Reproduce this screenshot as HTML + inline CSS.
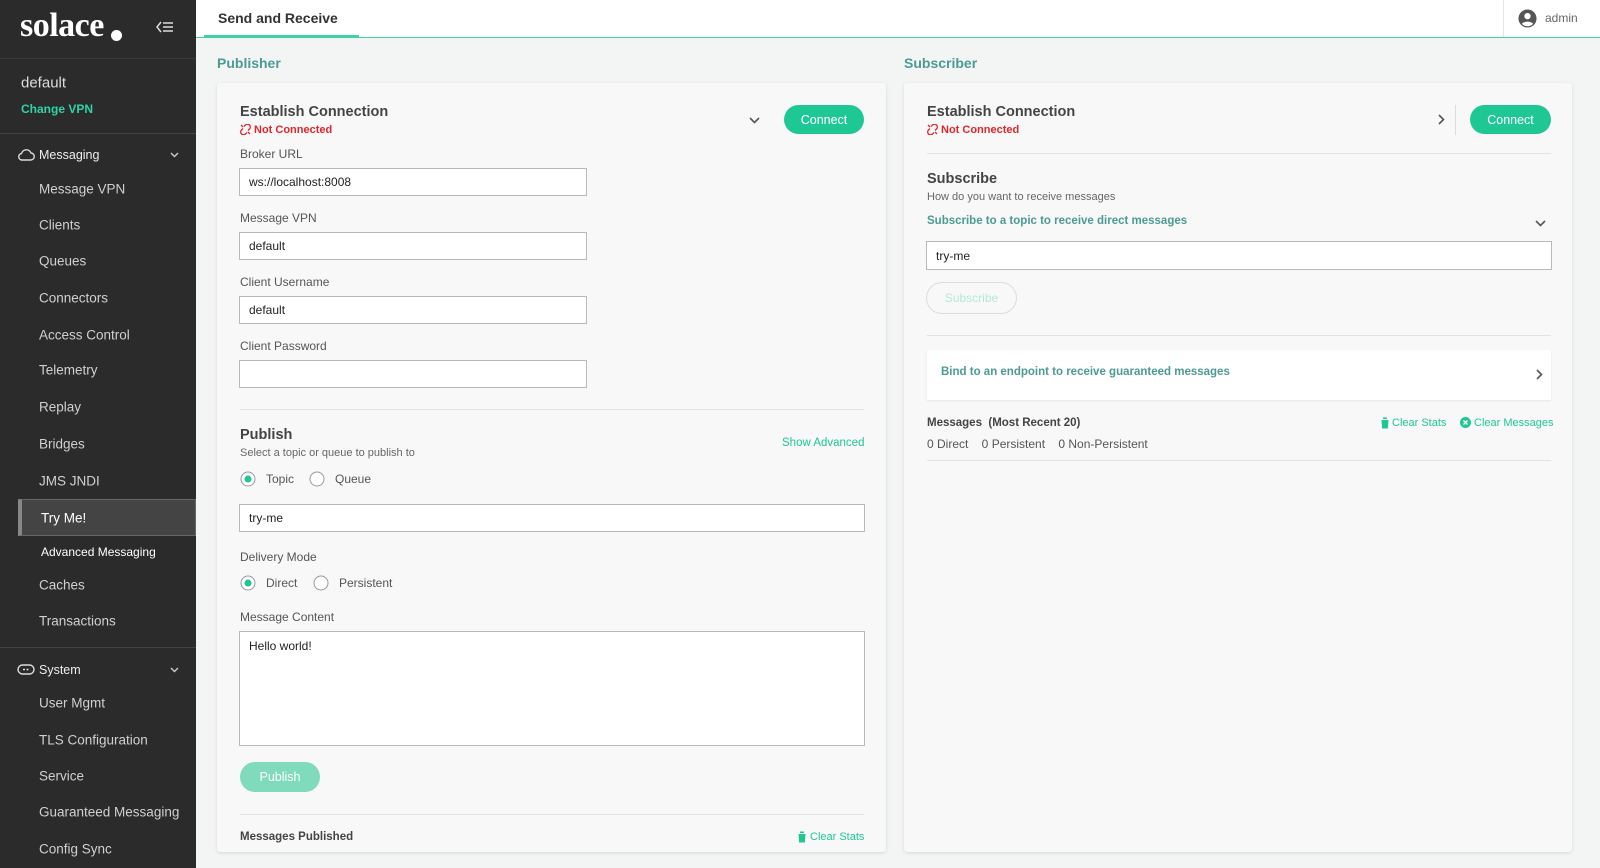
<!DOCTYPE html>
<html><head><meta charset="utf-8"><style>
*{box-sizing:border-box;margin:0;padding:0}
body{width:1600px;height:868px;overflow:hidden;background:#f3f4f4;font-family:"Liberation Sans",sans-serif;color:#333;position:relative;font-size:12px}
.a{position:absolute;white-space:nowrap}
#side{position:absolute;left:0;top:0;width:196px;height:868px;background:#2b2b2b}
.si{position:absolute;left:39px;color:#d0d0d0;font-size:13.5px;transform:translateY(-50%)}
.inp{position:absolute;background:#fff;border:1px solid #b9b9b9;font-size:12px;padding-left:9px;display:flex;align-items:center;color:#222}
.lbl{position:absolute;font-size:12px;color:#555;transform:translateY(-50%)}
.card{position:absolute;background:#f8f8f8;box-shadow:0 1px 3px rgba(0,0,0,.12);border-radius:3px}
.btn{position:absolute;background:#1fc795;color:#fff;border-radius:15px;font-size:12.5px;display:flex;align-items:center;justify-content:center}
.hr{position:absolute;height:1px;background:#e2e2e2}
.rad{position:absolute;width:15px;height:15px;border:1px solid #999;border-radius:50%;background:#fff;transform:translate(-50%,-50%)}
.rad.on::after{content:"";position:absolute;left:3px;top:3px;width:7px;height:7px;border-radius:50%;background:#1fc795}
.t{transform:translateY(-50%)}
.h{font-size:14.5px;font-weight:bold;color:#444}
.nc{color:#e0262d;font-weight:bold;font-size:11px}
.g{color:#1fc795}
</style></head><body>
<div id="side">
 <div class="a" style="left:20px;top:7px;font-family:'Liberation Serif',serif;font-size:34px;font-weight:bold;color:#fff;letter-spacing:-0.5px">solace</div>
 <div class="a" style="left:111px;top:30px;width:11px;height:11px;border-radius:50%;background:#fff"></div>
 <svg class="a" style="left:156px;top:21px" width="18" height="12" viewBox="0 0 18 12"><path d="M5 1L1 6l4 5M7 2h10M7 6h10M7 10h10" fill="none" stroke="#ddd" stroke-width="1.5"/></svg>
 <div class="a" style="left:0;top:58px;width:196px;height:1px;background:#3a3a3a"></div>
 <div class="a t" style="left:21px;top:83px;color:#ddd;font-size:15px">default</div>
 <div class="a t" style="left:21px;top:109px;color:#2fd3a5;font-size:12px;font-weight:bold">Change VPN</div>
 <div class="a" style="left:0;top:133px;width:196px;height:1px;background:#444"></div>
 <svg class="a" style="left:17px;top:148px" width="18" height="13" viewBox="0 0 18 13"><path d="M4.5 12h9a3.5 3.5 0 0 0 .5-7A5 5 0 0 0 4.5 5.5 3.3 3.3 0 0 0 4.5 12z" fill="none" stroke="#ddd" stroke-width="1.4"/></svg>
 <div class="si" style="left:39px;top:155px;color:#eee;font-size:12.5px">Messaging</div>
 <svg class="a" style="left:170px;top:152px" width="9" height="6" viewBox="0 0 9 6"><path d="M1 1l3.5 3.5L8 1" fill="none" stroke="#ccc" stroke-width="1.4"/></svg>
 <div class="si" style="top:189px">Message VPN</div>
 <div class="si" style="top:225px">Clients</div>
 <div class="si" style="top:261px">Queues</div>
 <div class="si" style="top:298px">Connectors</div>
 <div class="si" style="top:335px">Access Control</div>
 <div class="si" style="top:370px">Telemetry</div>
 <div class="si" style="top:407px">Replay</div>
 <div class="si" style="top:444px">Bridges</div>
 <div class="si" style="top:481px">JMS JNDI</div>
 <div class="a" style="left:18px;top:499px;width:178px;height:37px;background:#444;border:1px solid #666;border-left:4px solid #888"></div>
 <div class="si" style="left:41px;top:518px;color:#fff">Try Me!</div>
 <div class="si" style="left:41px;top:552px;color:#fff;font-size:12px">Advanced Messaging</div>
 <div class="si" style="top:585px">Caches</div>
 <div class="si" style="top:621px">Transactions</div>
 <div class="a" style="left:0;top:647px;width:196px;height:1px;background:#444"></div>
 <svg class="a" style="left:17px;top:664px" width="18" height="11" viewBox="0 0 18 11"><rect x="1" y="1" width="16" height="9" rx="4.5" fill="none" stroke="#ddd" stroke-width="1.4"/><path d="M6 5.5h6" stroke="#ddd" stroke-width="1.4" stroke-dasharray="2 1.5"/></svg>
 <div class="si" style="left:39px;top:670px;color:#eee;font-size:12.5px">System</div>
 <svg class="a" style="left:170px;top:667px" width="9" height="6" viewBox="0 0 9 6"><path d="M1 1l3.5 3.5L8 1" fill="none" stroke="#ccc" stroke-width="1.4"/></svg>
 <div class="si" style="top:703px">User Mgmt</div>
 <div class="si" style="top:740px">TLS Configuration</div>
 <div class="si" style="top:776px">Service</div>
 <div class="si" style="top:812px">Guaranteed Messaging</div>
 <div class="si" style="top:849px">Config Sync</div>
</div>
<div class="a" style="left:196px;top:0;width:1404px;height:38px;background:#fff;border-bottom:1px solid #3dd1a8"></div>
<div class="a t" style="left:218px;top:18px;font-size:14px;font-weight:bold;color:#333">Send and Receive</div>
<div class="a" style="left:204px;top:35px;width:155px;height:2px;background:#3dd1a8"></div>
<div class="a" style="left:1503px;top:0;width:1px;height:37px;background:#e5e5e5"></div>
<svg class="a" style="left:1518px;top:9px" width="19" height="19" viewBox="0 0 20 20"><circle cx="10" cy="10" r="9.5" fill="#555"/><circle cx="10" cy="7.5" r="3.3" fill="#fff"/><path d="M4 15.5a7 4.5 0 0 1 12 0a8 8 0 0 1-12 0z" fill="#fff"/></svg>
<div class="a t" style="left:1545px;top:18px;font-size:12px;color:#666">admin</div>

<div class="a t" style="left:217px;top:63px;font-size:14px;font-weight:bold;color:#4d9a94">Publisher</div>
<div class="a t" style="left:904px;top:63px;font-size:14px;font-weight:bold;color:#4d9a94">Subscriber</div>

<div class="card" style="left:217px;top:83px;width:669px;height:769px"></div>
<div class="a t h" style="left:240px;top:112px">Establish Connection</div>
<svg class="a" style="left:240px;top:124px" width="11" height="11" viewBox="0 0 11 11"><path d="M4 2.5L5.5 1a2.5 2.5 0 0 1 4 4L8 6.5M7 8.5L5.5 10a2.5 2.5 0 0 1-4-4L3 4.5M1 1l2 2M8 8l2 2" fill="none" stroke="#e0262d" stroke-width="1.3"/></svg>
<div class="a t nc" style="left:254px;top:130px">Not Connected</div>
<svg class="a" style="left:749px;top:117px" width="11" height="7" viewBox="0 0 11 7"><path d="M1 1l4.5 4.5L10 1" fill="none" stroke="#555" stroke-width="1.6"/></svg>
<div class="btn" style="left:784px;top:105px;width:80px;height:29px">Connect</div>
<div class="lbl" style="left:240px;top:154px">Broker URL</div>
<div class="inp" style="left:239px;top:168px;width:348px;height:28px">ws://localhost:8008</div>
<div class="lbl" style="left:240px;top:218px">Message VPN</div>
<div class="inp" style="left:239px;top:232px;width:348px;height:28px">default</div>
<div class="lbl" style="left:240px;top:282px">Client Username</div>
<div class="inp" style="left:239px;top:296px;width:348px;height:28px">default</div>
<div class="lbl" style="left:240px;top:346px">Client Password</div>
<div class="inp" style="left:239px;top:360px;width:348px;height:28px"></div>
<div class="hr" style="left:240px;top:409px;width:624px"></div>
<div class="a t h" style="left:240px;top:435px">Publish</div>
<div class="a t" style="left:240px;top:453px;font-size:11px;color:#666">Select a topic or queue to publish to</div>
<div class="a t g" style="left:782px;top:443px;font-size:11.5px">Show Advanced</div>
<div class="rad on" style="left:248px;top:479px"></div>
<div class="a t" style="left:266px;top:479px;color:#555">Topic</div>
<div class="rad" style="left:317px;top:479px"></div>
<div class="a t" style="left:335px;top:479px;color:#555">Queue</div>
<div class="inp" style="left:239px;top:504px;width:626px;height:28px">try-me</div>
<div class="lbl" style="left:240px;top:557px">Delivery Mode</div>
<div class="rad on" style="left:248px;top:583px"></div>
<div class="a t" style="left:266px;top:583px;color:#555">Direct</div>
<div class="rad" style="left:321px;top:583px"></div>
<div class="a t" style="left:339px;top:583px;color:#555">Persistent</div>
<div class="lbl" style="left:240px;top:617px">Message Content</div>
<div class="inp" style="left:239px;top:631px;width:626px;height:115px;align-items:flex-start;padding-top:7px">Hello world!</div>
<div class="btn" style="left:240px;top:762px;width:80px;height:30px;background:#7fdbbb">Publish</div>
<div class="hr" style="left:240px;top:814px;width:624px"></div>
<div class="a t" style="left:240px;top:837px;font-weight:bold;color:#444;font-size:11.5px">Messages Published</div>
<svg class="a" style="left:797px;top:831px" width="10" height="12" viewBox="0 0 10 12"><path d="M0 2h10M3 2V0.5h4V2M1.5 3h7l-.6 8.5H2.1z" fill="#1fc795"/></svg>
<div class="a t g" style="left:810px;top:837px;font-size:11px">Clear Stats</div>

<div class="card" style="left:904px;top:83px;width:668px;height:769px"></div>
<div class="a t h" style="left:927px;top:112px">Establish Connection</div>
<svg class="a" style="left:927px;top:124px" width="11" height="11" viewBox="0 0 11 11"><path d="M4 2.5L5.5 1a2.5 2.5 0 0 1 4 4L8 6.5M7 8.5L5.5 10a2.5 2.5 0 0 1-4-4L3 4.5M1 1l2 2M8 8l2 2" fill="none" stroke="#e0262d" stroke-width="1.3"/></svg>
<div class="a t nc" style="left:941px;top:130px">Not Connected</div>
<svg class="a" style="left:1438px;top:114px" width="7" height="11" viewBox="0 0 7 11"><path d="M1 1l4.5 4.5L1 10" fill="none" stroke="#555" stroke-width="1.6"/></svg>
<div class="a" style="left:1455px;top:105px;width:1px;height:30px;background:#ddd"></div>
<div class="btn" style="left:1470px;top:105px;width:81px;height:29px">Connect</div>
<div class="hr" style="left:927px;top:153px;width:624px"></div>
<div class="a t h" style="left:927px;top:179px">Subscribe</div>
<div class="a t" style="left:927px;top:197px;font-size:11px;color:#666">How do you want to receive messages</div>
<div class="a t" style="left:927px;top:221px;font-size:11.5px;font-weight:bold;color:#4d9a94">Subscribe to a topic to receive direct messages</div>
<svg class="a" style="left:1535px;top:220px" width="11" height="7" viewBox="0 0 11 7"><path d="M1 1l4.5 4.5L10 1" fill="none" stroke="#555" stroke-width="1.6"/></svg>
<div class="inp" style="left:926px;top:241px;width:626px;height:29px">try-me</div>
<div class="a" style="left:926px;top:282px;width:91px;height:32px;border:1px solid #ddd;border-radius:16px;color:#b5e8d6;font-size:12px;display:flex;align-items:center;justify-content:center">Subscribe</div>
<div class="hr" style="left:927px;top:335px;width:624px"></div>
<div class="a" style="left:927px;top:350px;width:624px;height:50px;background:#fff;box-shadow:0 1px 2px rgba(0,0,0,.08)"></div>
<div class="a t" style="left:941px;top:372px;font-size:11.5px;font-weight:bold;color:#4d9a94">Bind to an endpoint to receive guaranteed messages</div>
<svg class="a" style="left:1536px;top:369px" width="7" height="11" viewBox="0 0 7 11"><path d="M1 1l4.5 4.5L1 10" fill="none" stroke="#555" stroke-width="1.6"/></svg>
<div class="a t" style="left:927px;top:423px;font-weight:bold;color:#444;font-size:11.5px">Messages &nbsp;(Most Recent 20)</div>
<svg class="a" style="left:1380px;top:417px" width="10" height="12" viewBox="0 0 10 12"><path d="M0 2h10M3 2V0.5h4V2M1.5 3h7l-.6 8.5H2.1z" fill="#1fc795"/></svg>
<div class="a t g" style="left:1392px;top:423px;font-size:11px">Clear Stats</div>
<svg class="a" style="left:1460px;top:417px" width="11" height="11" viewBox="0 0 11 11"><circle cx="5.5" cy="5.5" r="5.5" fill="#1fc795"/><path d="M3.5 3.5l4 4M7.5 3.5l-4 4" stroke="#fff" stroke-width="1.4"/></svg>
<div class="a t g" style="left:1474px;top:423px;font-size:11px">Clear Messages</div>
<div class="a t" style="left:927px;top:444px;color:#555;font-size:12px">0 Direct &nbsp;&nbsp; 0 Persistent &nbsp;&nbsp; 0 Non-Persistent</div>
<div class="hr" style="left:927px;top:460px;width:624px"></div>
</body></html>
